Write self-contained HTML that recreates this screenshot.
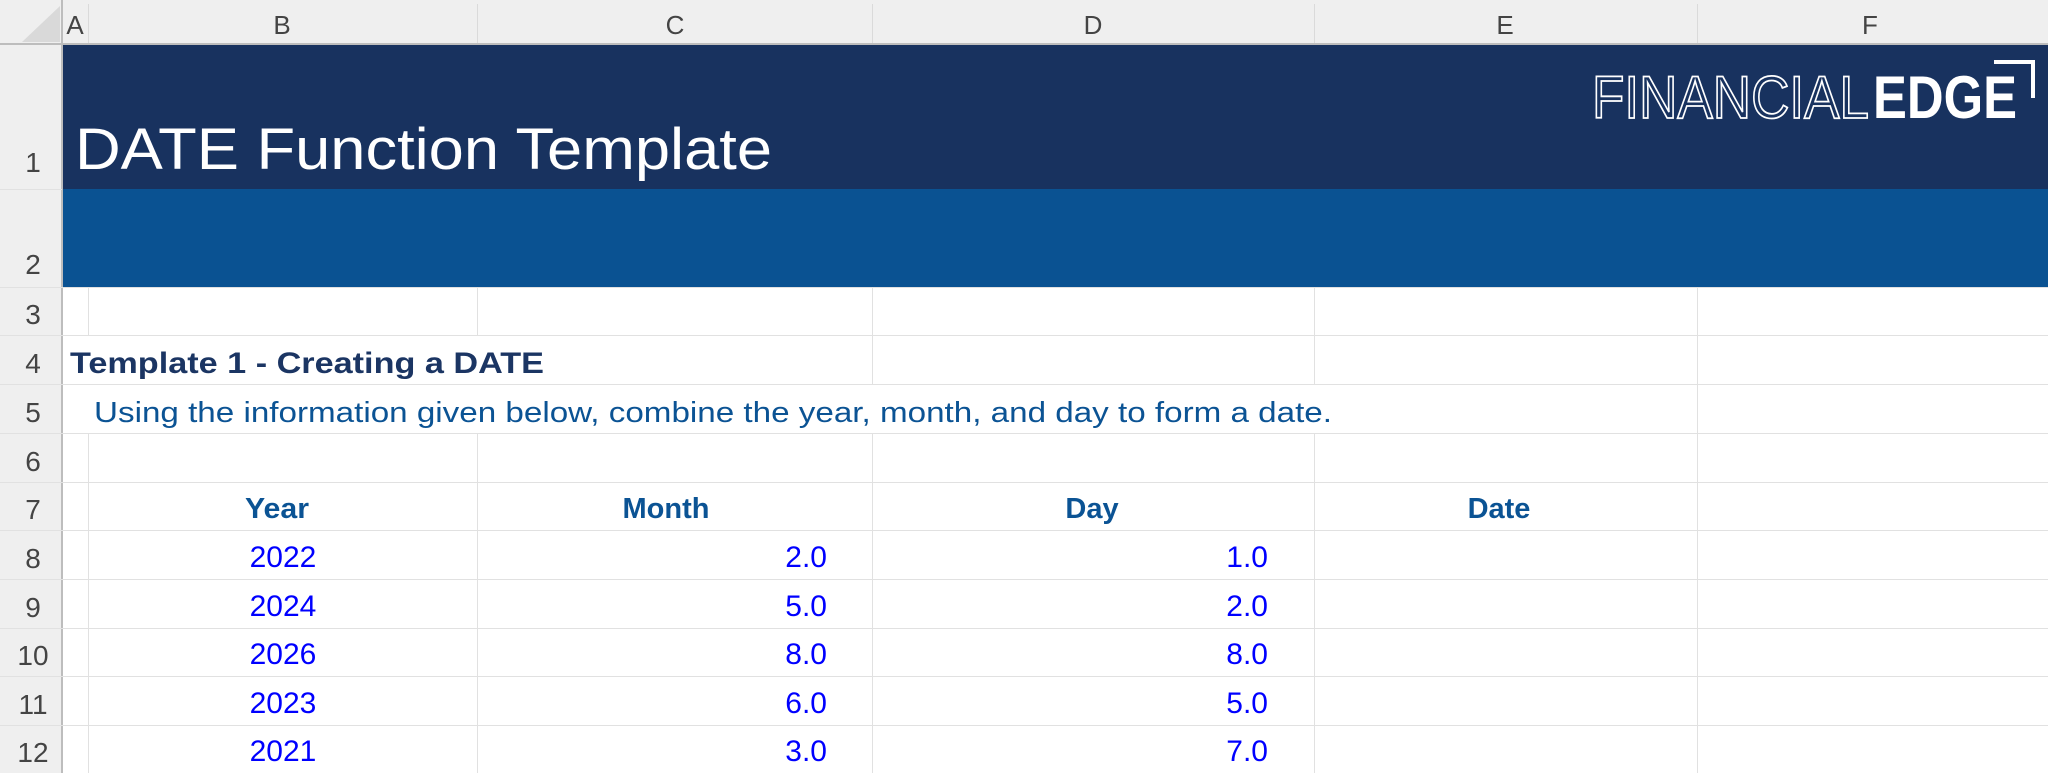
<!DOCTYPE html>
<html><head><meta charset="utf-8"><style>
html,body{margin:0;padding:0;background:#fff;width:2048px;height:773px;overflow:hidden}
svg{display:block}
text{font-family:"Liberation Sans",sans-serif}
</style></head><body>
<svg width="2048" height="773" viewBox="0 0 2048 773" xmlns="http://www.w3.org/2000/svg">
<rect width="2048" height="773" fill="#fff"/>
<rect x="0" y="0" width="2048" height="44" fill="#efefef"/>
<rect x="0" y="0" width="62" height="773" fill="#efefef"/>
<polygon points="22,42 60,42 60,6" fill="#d9d9d9"/>
<line x1="0" y1="44" x2="2048" y2="44" stroke="#bdbdbd" stroke-width="2"/>
<line x1="62" y1="0" x2="62" y2="773" stroke="#bdbdbd" stroke-width="2"/>
<g stroke="#dadada" stroke-width="1">
<line x1="88.5" y1="4" x2="88.5" y2="43"/><line x1="477.5" y1="4" x2="477.5" y2="43"/><line x1="872.5" y1="4" x2="872.5" y2="43"/><line x1="1314.5" y1="4" x2="1314.5" y2="43"/><line x1="1697.5" y1="4" x2="1697.5" y2="43"/>
</g>
<g fill="#444" font-size="26" text-anchor="middle">
<text x="75" y="34">A</text><text x="282" y="34">B</text><text x="675" y="34">C</text><text x="1093" y="34">D</text><text x="1505" y="34">E</text><text x="1870" y="34">F</text>
</g>
<rect x="63" y="45" width="1985" height="144" fill="#18325f"/>
<rect x="63" y="189" width="1985" height="98" fill="#0a5292"/>
<text x="75" y="169" fill="#fff" font-size="58" textLength="697" lengthAdjust="spacingAndGlyphs">DATE Function Template</text>
<text x="1592" y="118" fill="none" stroke="#fff" stroke-width="1.8" font-size="60" textLength="277" lengthAdjust="spacingAndGlyphs">FINANCIAL</text>
<text x="1873" y="118" fill="#fff" font-weight="bold" font-size="60" textLength="144" lengthAdjust="spacingAndGlyphs">EDGE</text>
<polyline points="1994,62 2033,62 2033,98" fill="none" stroke="#fff" stroke-width="4"/>
<g stroke="#e1e1e1" stroke-width="1">
<line x1="88.5" y1="287" x2="88.5" y2="335"/><line x1="477.5" y1="287" x2="477.5" y2="335"/><line x1="872.5" y1="287" x2="872.5" y2="384"/><line x1="1314.5" y1="287" x2="1314.5" y2="384"/><line x1="1697.5" y1="287" x2="1697.5" y2="773"/>
<line x1="88.5" y1="433" x2="88.5" y2="773"/><line x1="477.5" y1="433" x2="477.5" y2="773"/><line x1="872.5" y1="433" x2="872.5" y2="773"/><line x1="1314.5" y1="433" x2="1314.5" y2="773"/>
<line x1="0" y1="189.5" x2="62" y2="189.5"/><line x1="0" y1="287.5" x2="2048" y2="287.5"/>
<line x1="0" y1="335.5" x2="2048" y2="335.5"/><line x1="0" y1="384.5" x2="2048" y2="384.5"/><line x1="0" y1="433.5" x2="2048" y2="433.5"/><line x1="0" y1="482.5" x2="2048" y2="482.5"/><line x1="0" y1="530.5" x2="2048" y2="530.5"/><line x1="0" y1="579.5" x2="2048" y2="579.5"/><line x1="0" y1="628.5" x2="2048" y2="628.5"/><line x1="0" y1="676.5" x2="2048" y2="676.5"/><line x1="0" y1="725.5" x2="2048" y2="725.5"/>
</g>
<g fill="#444" font-size="28" text-anchor="middle">
<text x="33" y="172">1</text><text x="33" y="274">2</text><text x="33" y="324">3</text><text x="33" y="373">4</text><text x="33" y="422">5</text><text x="33" y="471">6</text><text x="33" y="519">7</text><text x="33" y="568">8</text><text x="33" y="617">9</text><text x="33" y="665">10</text><text x="33" y="714">11</text><text x="33" y="762">12</text>
</g>
<text x="70" y="373" fill="#1b3563" font-size="30" font-weight="bold" textLength="474" lengthAdjust="spacingAndGlyphs">Template 1 - Creating a DATE</text>
<text x="94" y="422" fill="#0b5394" font-size="29" textLength="1238" lengthAdjust="spacingAndGlyphs">Using the information given below, combine the year, month, and day to form a date.</text>
<g fill="#0b5394" font-size="29" font-weight="bold" text-anchor="middle">
<text x="277" y="518" textLength="64" lengthAdjust="spacingAndGlyphs">Year</text><text x="666" y="518">Month</text><text x="1092" y="518">Day</text><text x="1499" y="518">Date</text>
</g>
<g fill="#0000ff" font-size="30">
<g text-anchor="middle"><text x="283" y="567">2022</text><text x="283" y="616">2024</text><text x="283" y="664">2026</text><text x="283" y="713">2023</text><text x="283" y="761">2021</text></g>
<g text-anchor="end"><text x="827" y="567">2.0</text><text x="827" y="616">5.0</text><text x="827" y="664">8.0</text><text x="827" y="713">6.0</text><text x="827" y="761">3.0</text>
<text x="1268" y="567">1.0</text><text x="1268" y="616">2.0</text><text x="1268" y="664">8.0</text><text x="1268" y="713">5.0</text><text x="1268" y="761">7.0</text></g>
</g>
</svg>
</body></html>
